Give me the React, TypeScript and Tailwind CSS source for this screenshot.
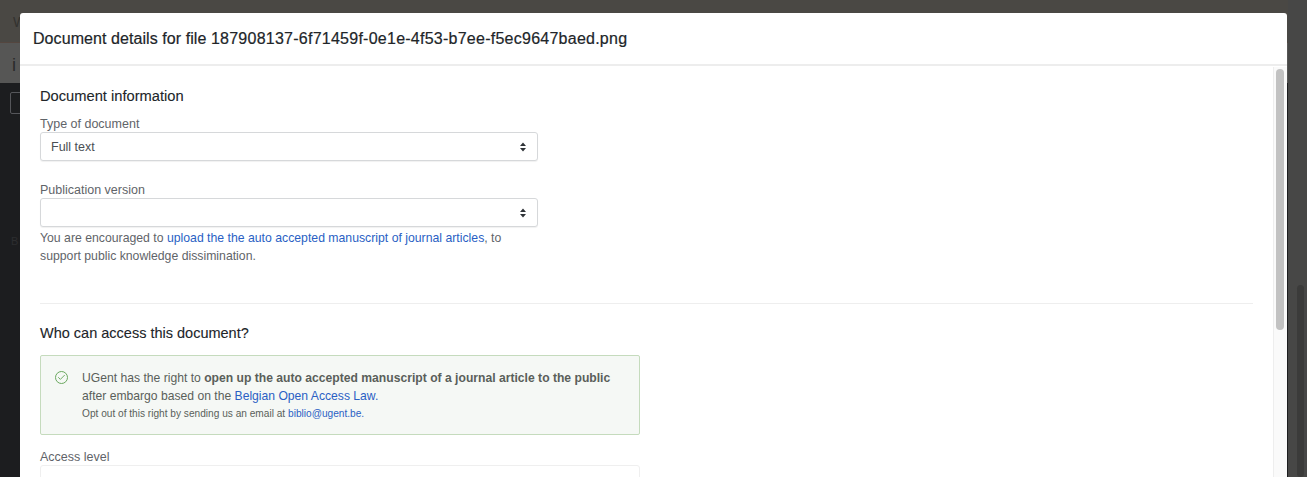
import { Check } from "lucide-react";

function SelectBox({ value, dim }: { value?: string; dim?: boolean }) {
  return (
    <div
      className={`flex items-center justify-between rounded-[3px] border bg-white pl-[10px] pr-[11px] text-[12.5px] text-[#4a4f54] ${
        dim
          ? "h-[30px] border-[#efefef]"
          : "h-[29px] border-[#d6d8da] shadow-[0_1px_1px_rgba(0,0,0,0.06)]"
      }`}
    >
      <span className="pt-[1px]">{value}</span>
      {!dim && (
        <svg width="6" height="10" viewBox="0 0 6 10" className="fill-[#2f3338]">
          <path d="M3 0.5 6 4H0zM3 9.5 0 6h6z" />
        </svg>
      )}
    </div>
  );
}

function FieldLabel({ children }: { children: string }) {
  return <div className="pt-[2px] text-[12.5px] leading-[15px] text-[#5f6469]">{children}</div>;
}

export default function App() {
  return (
    <div className="relative h-[477px] w-[1307px] overflow-hidden bg-[#1c1d1f] font-['Liberation_Sans',Arial,sans-serif]">
      {/* page behind the backdrop */}
      <div className="h-[43px] border-b border-[#54463f] bg-[#4a4844] pl-[13px] pt-[13px] text-[14px] leading-[18px] text-[#33322f]">
        W
      </div>
      <div className="h-[40px] bg-[#565655] pl-[12px] pt-[11px] text-[18px] leading-[22px] text-[#2a2a2a]">i</div>
      <div className="ml-[10px] mt-[9px] h-[22px] w-[20px] rounded-[2px] border border-[#55565a]" />
      <div className="ml-[11px] mt-[120px] text-[11px] leading-[14px] text-[#2c2d2f]">B</div>
      <div className="absolute bottom-0 right-0 top-0 w-[19px] bg-[#474746]">
        <div className="absolute bottom-0 left-[9px] top-[285px] w-[7px] rounded-full bg-[#3b3b3a]" />
      </div>

      {/* modal */}
      <div className="absolute left-[20px] top-[13px] h-[480px] w-[1267px] overflow-hidden rounded-t-[3px] bg-white">
        <div className="flex h-[53px] items-center whitespace-pre border-b-2 border-[#ededed] pl-[13px] pt-[1px] text-[16px] tracking-[0.07px] text-[#212529] [-webkit-text-stroke:0.2px]">
          Document details for file <span className="tracking-[0.25px]">187908137-6f71459f-0e1e-4f53-b7ee-f5ec9647baed.png</span>
        </div>

        <div className="w-[1233px] pl-[20px] pt-[20px]">
          <h2 className="text-[14.7px] leading-[20px] text-[#212529] [-webkit-text-stroke:0.1px]">Document information</h2>

          <div className="mt-[9px] w-[497.5px]">
            <FieldLabel>Type of document</FieldLabel>
            <SelectBox value="Full text" />
          </div>

          <div className="mt-[20px] w-[497.5px]">
            <FieldLabel>Publication version</FieldLabel>
            <SelectBox />
            <div className="mt-[3px] text-[12.25px] leading-[17.5px] text-[#5f6469]">
              <p>
                You are encouraged to{" "}
                <span className="text-[#2a5fc4]">upload the the auto accepted manuscript of journal articles</span>, to
              </p>
              <p>support public knowledge dissimination.</p>
            </div>
          </div>

          <div className="mt-[38px] h-px bg-[#eeeeee]" />

          <h2 className="mt-[19px] text-[14.5px] leading-[20px] text-[#212529] [-webkit-text-stroke:0.1px]">
            Who can access this document?
          </h2>

          <div className="mt-[12px] flex h-[80px] w-[600px] gap-[14px] rounded-[2px] border border-[#c5dbbd] bg-[#f5f8f5] pl-[14px] pt-[14px]">
            <div className="mt-[1px] flex h-[13px] w-[13px] shrink-0 items-center justify-center rounded-full border-[1.5px] border-[#6aa85f]">
              <Check size={9} strokeWidth={2.5} className="text-[#6aa85f]" />
            </div>
            <div className="text-[#5a5f5a]">
              <p className="text-[12.15px] leading-[17.5px]">
                UGent has the right to{" "}
                <strong className="font-bold">open up the auto accepted manuscript of a journal article to the public</strong>
              </p>
              <p className="text-[12.15px] leading-[17.5px]">
                after embargo based on the <span className="text-[#2a5fc4]">Belgian Open Access Law.</span>
              </p>
              <p className="mt-[1px] text-[10.15px] leading-[15px]">
                Opt out of this right by sending us an email at <span className="text-[#2a5fc4]">biblio@ugent.be.</span>
              </p>
            </div>
          </div>

          <div className="mt-[13px] w-[600px]">
            <FieldLabel>Access level</FieldLabel>
            <SelectBox dim />
          </div>
        </div>

        {/* modal scrollbar */}
        <div className="absolute bottom-0 right-0 top-[54px] w-[14px] border-l border-[#eeeeee] bg-[#fafafa]">
          <div className="absolute left-[2px] top-[2px] h-[261px] w-[8px] rounded-full bg-[#c2c2c2]" />
        </div>
      </div>
    </div>
  );
}
